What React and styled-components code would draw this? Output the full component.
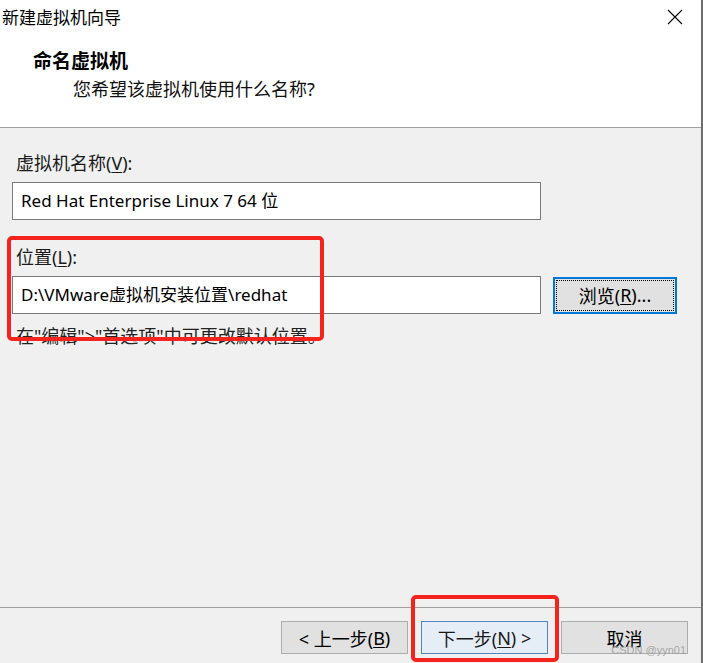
import React from "react";
import styled, { createGlobalStyle } from "styled-components";

const Global = createGlobalStyle`
  html, body { margin: 0; padding: 0; background: #f0f0f0; }
  body { font-family: "Noto Sans", "Noto Sans CJK SC", sans-serif; }
`;

const Window = styled.div`
  position: relative;
  width: 703px;
  height: 663px;
  box-sizing: border-box;
  border-right: 2px solid #6e6e6e;
  background: #f0f0f0;
  display: flex;
  flex-direction: column;
  overflow: hidden;
  color: #000;
`;

const Header = styled.div`
  height: 128px;
  box-sizing: border-box;
  background: #fff;
  border-bottom: 1px solid #a0a0a0;
  display: flex;
  flex-direction: column;
`;

const TitleBar = styled.div`
  height: 33px;
  display: flex;
  align-items: center;
  justify-content: space-between;
  padding: 0 18px 0 2px;
  font-size: 17px;
`;

const Close = styled.svg`
  width: 16px;
  height: 16px;
`;

const Heading = styled.div`
  margin: 14px 0 0 33px;
  font-size: 19px;
  font-weight: 700;
  line-height: 28px;
`;

const Sub = styled.div`
  margin-left: 73px;
  font-size: 18px;
  line-height: 28px;
  color: #111;
`;

const Body = styled.div`
  flex: 1;
  padding: 22px 0 0 12px;
  display: flex;
  flex-direction: column;
`;

const Label = styled.div`
  font-size: 18px;
  line-height: 26px;
  padding-left: 4px;
  margin-bottom: 6px;
  color: #1a1a1a;
  u { text-decoration: underline; text-underline-offset: 2px; }
`;

const Row = styled.div`
  display: flex;
  align-items: center;
  gap: 12px;
  margin-bottom: ${(p) => p.$mb || 0}px;
`;

const Field = styled.div`
  width: 529px;
  height: 38px;
  box-sizing: border-box;
  border: 1px solid #7a7a7a;
  background: #fff;
  display: flex;
  align-items: center;
  padding: 0 8px 4px;
  font-size: 17px;
  white-space: nowrap;
`;

const Browse = styled.div`
  width: 124px;
  height: 37px;
  box-sizing: border-box;
  border: 2px solid #0078d7;
  background: #e1e1e1;
  display: flex;
  align-items: center;
  justify-content: center;
  font-size: 18px;
  outline: 1px dotted #000;
  outline-offset: -4px;
  u { text-decoration: underline; text-underline-offset: 2px; }
`;

const Hint = styled.div`
  font-size: 18px;
  line-height: 26px;
  padding-left: 4px;
  margin-top: 9px;
  color: #222;
`;

const Footer = styled.div`
  height: 56px;
  box-sizing: border-box;
  border-top: 1px solid #a0a0a0;
  display: flex;
  align-items: flex-start;
  justify-content: flex-end;
  gap: 13px;
  padding: 13px 13px 0 0;
`;

const Btn = styled.div`
  width: 127px;
  height: 33px;
  box-sizing: border-box;
  border: 1px solid ${(p) => (p.$primary ? "#4f86c0" : "#adadad")};
  background: ${(p) => (p.$primary ? "#e5eef7" : "#e1e1e1")};
  display: flex;
  align-items: center;
  justify-content: center;
  font-size: 18px;
  color: ${(p) => (p.$primary ? "#1a1a1a" : "#000")};
  u { text-decoration: underline; text-underline-offset: 2px; }
`;

const Mark = styled.div`
  position: absolute;
  left: ${(p) => p.$x}px;
  top: ${(p) => p.$y}px;
  width: ${(p) => p.$w}px;
  height: ${(p) => p.$h}px;
  box-sizing: border-box;
  border: 4px solid #f5231d;
  border-radius: 5px;
  pointer-events: none;
`;

const Watermark = styled.div`
  position: absolute;
  right: 15px;
  bottom: 7px;
  font-family: "Liberation Sans", sans-serif;
  font-size: 11px;
  color: rgba(150, 150, 150, 0.8);
`;

export default function App() {
  return (
    <>
      <Global />
      <Window>
        <Header>
          <TitleBar>
            <span>新建虚拟机向导</span>
            <Close viewBox="0 0 16 16">
              <path d="M1 1 L15 15 M15 1 L1 15" stroke="#000" strokeWidth="1.1" fill="none" />
            </Close>
          </TitleBar>
          <Heading>命名虚拟机</Heading>
          <Sub>您希望该虚拟机使用什么名称?</Sub>
        </Header>
        <Body>
          <Label>
            虚拟机名称(<u>V</u>):
          </Label>
          <Row $mb={24}>
            <Field>Red Hat Enterprise Linux 7 64 位</Field>
          </Row>
          <Label>
            位置(<u>L</u>):
          </Label>
          <Row>
            <Field>D:\VMware虚拟机安装位置\redhat</Field>
            <Browse>
              浏览(<u>R</u>)...
            </Browse>
          </Row>
          <Hint>在"编辑"&gt;"首选项"中可更改默认位置。</Hint>
        </Body>
        <Footer>
          <Btn>
            &lt; 上一步(<u>B</u>)
          </Btn>
          <Btn $primary>
            下一步(<u>N</u>) &gt;
          </Btn>
          <Btn>取消</Btn>
        </Footer>
        <Mark $x={7} $y={236} $w={317} $h={105} />
        <Mark $x={411} $y={595} $w={148} $h={67} />
        <Watermark>CSDN @yyn01</Watermark>
      </Window>
    </>
  );
}
